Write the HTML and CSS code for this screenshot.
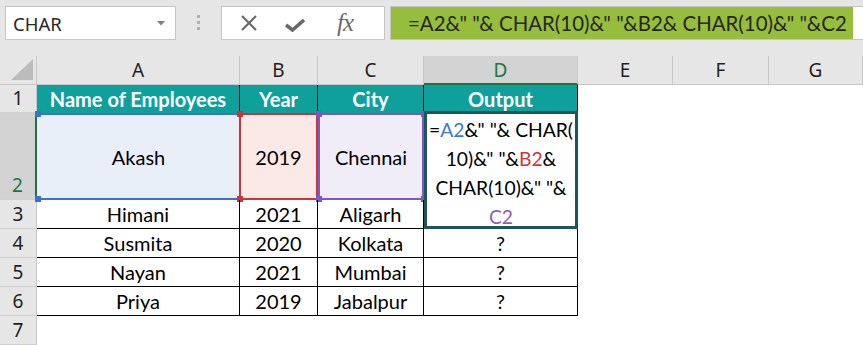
FILE: index.html
```html
<!DOCTYPE html>
<html>
<head>
  <title>CHAR formula</title>
  <meta charset="UTF-8">
  <meta name="viewport" content="width=device-width, initial-scale=1.0">
  <link rel="stylesheet" href="styles.css">
</head>
<body>
  <div class="toolbar">
    <div class="name-box">
      <span>CHAR</span>
      <svg width="8" height="5" viewBox="0 0 8 5"><path d="M0 0h8L4 4.5z" fill="#808080"/></svg>
    </div>
    <div class="grip"><i></i><i></i><i></i></div>
    <div class="fx-tools">
      <svg class="tool-x" width="18" height="16" viewBox="0 0 18 16"><path d="M2 1l14 14M16 1L2 15" stroke="#6a6a6a" stroke-width="2.2" fill="none"/></svg>
      <svg class="tool-ok" width="20" height="13" viewBox="0 0 20 13"><path d="M1 6l6.5 5L19 1" stroke="#6a6a6a" stroke-width="3.6" fill="none"/></svg>
      <span class="tool-fx">fx</span>
    </div>
    <div class="formula">
      <span class="formula-text">=A2&amp;" "&amp; CHAR(10)&amp;" "&amp;B2&amp; CHAR(10)&amp;" "&amp;C2</span>
    </div>
  </div>

  <div class="sheet">
    <!-- column headers -->
    <div class="corner"><svg width="22" height="21" viewBox="0 0 22 21"><path d="M22 0V21H0z" fill="#bcbcbc"/></svg></div>
    <div class="col-head">A</div>
    <div class="col-head">B</div>
    <div class="col-head">C</div>
    <div class="col-head active">D</div>
    <div class="col-head">E</div>
    <div class="col-head">F</div>
    <div class="col-head">G</div>

    <!-- row 1 -->
    <div class="row-head">1</div>
    <div class="cell title">Name of Employees</div>
    <div class="cell title">Year</div>
    <div class="cell title">City</div>
    <div class="cell title">Output</div>
    <div class="blank"></div>
    <div class="blank"></div>
    <div class="blank"></div>

    <!-- row 2 -->
    <div class="row-head active">2</div>
    <div class="cell ref ref-a">Akash<b class="dot-top"></b><b class="dot-bottom"></b></div>
    <div class="cell ref ref-b">2019<b class="dot-top"></b><b class="dot-bottom"></b></div>
    <div class="cell ref ref-c">Chennai<b class="dot-top"></b><b class="dot-bottom"></b></div>
    <div class="cell selected">
      =<span class="c-a">A2</span>&amp;" "&amp; CHAR(<br>
      10)&amp;" "&amp;<span class="c-b">B2</span>&amp;<br>
      CHAR(10)&amp;" "&amp;<br>
      <span class="c-c">C2</span>
    </div>
    <div class="blank"></div>
    <div class="blank"></div>
    <div class="blank"></div>

    <!-- row 3 -->
    <div class="row-head">3</div>
    <div class="cell">Himani</div>
    <div class="cell">2021</div>
    <div class="cell">Aligarh</div>
    <div class="blank"></div>
    <div class="blank"></div>
    <div class="blank"></div>

    <!-- row 4 -->
    <div class="row-head">4</div>
    <div class="cell">Susmita</div>
    <div class="cell">2020</div>
    <div class="cell">Kolkata</div>
    <div class="cell">?</div>
    <div class="blank"></div>
    <div class="blank"></div>
    <div class="blank"></div>

    <!-- row 5 -->
    <div class="row-head">5</div>
    <div class="cell">Nayan</div>
    <div class="cell">2021</div>
    <div class="cell">Mumbai</div>
    <div class="cell">?</div>
    <div class="blank"></div>
    <div class="blank"></div>
    <div class="blank"></div>

    <!-- row 6 -->
    <div class="row-head">6</div>
    <div class="cell">Priya</div>
    <div class="cell">2019</div>
    <div class="cell">Jabalpur</div>
    <div class="cell">?</div>
    <div class="blank"></div>
    <div class="blank"></div>
    <div class="blank"></div>

    <!-- row 7 -->
    <div class="row-head">7</div>
  </div>
</body>
</html>
```

FILE: styles.css
```css
* {
  box-sizing: border-box;
}

body {
  margin: 0;
  width: 863px;
  height: 345px;
  overflow: hidden;
  background: #fff;
  font-family: Lato, "Liberation Sans", sans-serif;
  color: #000;
}

/* formula bar */

.toolbar {
  display: flex;
  height: 56px;
  padding-top: 6px;
  background: #e6e6e6;
}

.name-box {
  display: flex;
  align-items: center;
  justify-content: space-between;
  width: 171px;
  height: 34px;
  margin-left: 5px;
  padding: 0 10px 0 7px;
  background: #fff;
  border: 1px solid #c6c6c6;
  font-family: "Noto Sans", sans-serif;
  font-size: 18.5px;
  color: #262626;
}

.grip {
  display: flex;
  flex-direction: column;
  align-items: center;
  gap: 3px;
  width: 45px;
  padding-top: 9px;
}

.grip i {
  width: 3px;
  height: 3px;
  background: #b0b0b0;
}

.fx-tools {
  display: flex;
  align-items: center;
  width: 164px;
  height: 34px;
  background: #fff;
  border: 1px solid #c6c6c6;
}

.tool-x {
  margin-left: 18px;
}

.tool-ok {
  margin-left: 27px;
  margin-top: 4px;
}

.tool-fx {
  margin-left: 32px;
  font-family: "Liberation Serif", serif;
  font-style: italic;
  font-size: 25px;
  color: #6a6a6a;
  letter-spacing: -1px;
}

.formula {
  flex: 1;
  height: 34px;
  margin-left: 5px;
  background: #fff;
  border: 1px solid #c6c6c6;
  border-right: none;
}

.formula-text {
  display: flex;
  align-items: center;
  width: 462px;
  height: 100%;
  padding-left: 17px;
  background: #97bd3d;
  font-size: 20.4px;
  color: #262626;
  white-space: nowrap;
}

/* grid */

.sheet {
  display: grid;
  grid-template-columns: 37px 203px 78px 106px 154px 95px 96px 94px;
  grid-template-rows: 29px 28px 87px 29px 29px 29px 29px 29px;
}

.corner {
  display: flex;
  align-items: flex-end;
  justify-content: flex-end;
  padding: 0 3px 4px 0;
  background: #e6e6e6;
  border-right: 1px solid #c8c8c8;
  border-bottom: 1px solid #c8c8c8;
}

.col-head {
  display: flex;
  align-items: center;
  justify-content: center;
  background: #e6e6e6;
  border-right: 1px solid #c8c8c8;
  border-bottom: 1px solid #c8c8c8;
  font-family: "Noto Sans", sans-serif;
  font-size: 19px;
  color: #1f1f1f;
}

.col-head.active {
  background: #d3d3d3;
  border-bottom: 2px solid #217346;
  color: #217346;
}

.row-head {
  display: flex;
  align-items: flex-end;
  justify-content: center;
  padding-bottom: 1px;
  background: #e6e6e6;
  border-right: 1px solid #c8c8c8;
  border-bottom: 1px solid #d0d0d0;
  font-family: "Noto Sans", sans-serif;
  font-size: 19px;
  color: #1f1f1f;
  grid-column: 1;
}

.row-head.active {
  background: #d3d3d3;
  border-right: 2px solid #217346;
  color: #217346;
}

.cell {
  position: relative;
  display: flex;
  align-items: center;
  justify-content: center;
  border-right: 1px solid #000;
  border-bottom: 1px solid #000;
  font-size: 20px;
  white-space: nowrap;
}

.title {
  background: #10a09c;
  color: #fff;
  font-weight: bold;
  border-bottom: none;
}

/* formula references */

.ref {
  border-width: 2px;
  border-style: solid;
}

.ref-a {
  background: #e8eff9;
  border-color: #3c73c8;
  border-left: none;
  border-right: none;
}

.ref-b {
  background: #fbe9e8;
  border-color: #c8363c;
  margin-left: -1px;
}

.ref-c {
  background: #f0ecf8;
  border-color: #7e57c2;
}

.dot-top,
.dot-bottom {
  position: absolute;
  width: 6px;
  height: 6px;
}

.dot-top {
  top: -4px;
}

.dot-bottom {
  bottom: -4px;
}

.ref-a .dot-top,
.ref-a .dot-bottom {
  left: -2px;
  background: #3c73c8;
}

.ref-b .dot-top,
.ref-b .dot-bottom {
  left: -4px;
  background: #c8363c;
  box-shadow: 79px 0 0 #c8363c;
}

.ref-c .dot-top,
.ref-c .dot-bottom {
  left: -4px;
  background: #7e57c2;
  box-shadow: 105px 0 0 #7e57c2;
}

.c-a {
  color: #3b78d8;
}

.c-b {
  color: #d13438;
}

.c-c {
  color: #8a5cc0;
}

.selected {
  grid-row: span 2;
  display: block;
  margin-top: -2px;
  padding-top: 1px;
  border: 3px solid #1c5656;
  font-size: 19.3px;
  line-height: 29px;
  text-align: center;
  background: #fff;
  z-index: 1;
}

.blank {
  background: #fff;
}
```
